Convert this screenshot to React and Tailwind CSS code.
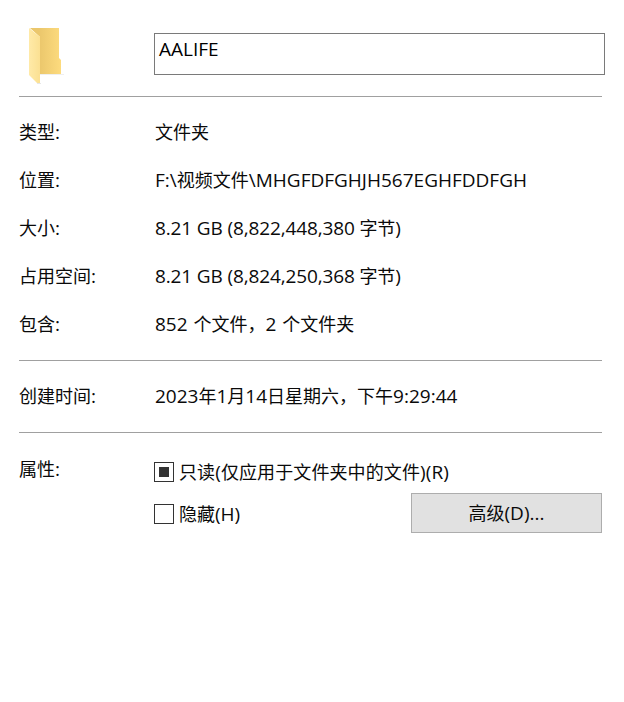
const font = { fontFamily: '"Open Sans","Noto Sans CJK SC",sans-serif' };

// Latin runs are set a little larger than the CJK runs, as in the reference's font pairing.
function T({ children }) {
  const parts = String(children).split(/([\x20-\x7e]+)/);
  return (
    <>
      {parts.map((p, i) =>
        i % 2 === 1 ? (
          <span key={i} className="text-[19px]">{p}</span>
        ) : (
          <span key={i}>{p}</span>
        )
      )}
    </>
  );
}

function Row({ label, value, valueClass = "" }) {
  return (
    <div className="flex h-[48px] items-center">
      <div className="w-[136px] shrink-0"><T>{label}</T></div>
      <div className={valueClass}><T>{value}</T></div>
    </div>
  );
}

function Folder() {
  return (
    <svg width="38" height="58" viewBox="0 0 38 58" className="block">
      <defs>
        <linearGradient id="back" x1="0.3" x2="1" y1="0" y2="0">
          <stop offset="0" stopColor="#ebc76c" />
          <stop offset="1" stopColor="#fddb7e" />
        </linearGradient>
        <linearGradient id="front" x1="0" x2="1" y1="0" y2="0">
          <stop offset="0" stopColor="#ffeaa8" />
          <stop offset="1" stopColor="#fbe092" />
        </linearGradient>
      </defs>
      <path d="M11 46H35V47H11Z" fill="#efefef" />
      <path d="M8 55H12V56H8Z" fill="#e6e6e6" />
      <path d="M1 0H30V30L32 32V46H11V9Z" fill="url(#back)" />
      <path d="M0 0L11 9V55H8L0 47Z" fill="url(#front)" />
    </svg>
  );
}

function Box({ checked }) {
  return (
    <div className="flex h-[20px] w-[20px] shrink-0 items-center justify-center border border-[#333333] bg-white">
      {checked && <div className="h-[10px] w-[10px] bg-[#333333]" />}
    </div>
  );
}

export default function App() {
  return (
    <div className="h-[702px] w-[624px] overflow-hidden bg-white pl-[19px] text-[18px] leading-[24px] text-[#0a0a0a]" style={font}>
      <div className="flex h-[97px] w-[583px] items-start border-b border-[#a0a0a0] pt-[28px]">
        <div className="ml-[10px] w-[125px] shrink-0"><Folder /></div>
        <div className="mt-[5px] h-[42px] w-[451px] shrink-0 border border-[#7a7a7a] px-[4px] pt-[3px] text-black"><T>AALIFE</T></div>
      </div>
      <div className="w-[583px] border-b border-[#a0a0a0] pt-[11px] pb-[12px]">
        <Row label="类型:" value="文件夹" />
        <Row label="位置:" value="F:\视频文件\MHGFDFGHJH567EGHFDDFGH" />
        <Row label="大小:" value="8.21 GB (8,822,448,380 字节)" valueClass="tracking-[-0.13px]" />
        <Row label="占用空间:" value="8.21 GB (8,824,250,368 字节)" valueClass="tracking-[-0.13px]" />
        <Row label="包含:" value="852 个文件，2 个文件夹" valueClass="[word-spacing:1px]" />
      </div>
      <div className="w-[583px] border-b border-[#a0a0a0] pt-[11px] pb-[12px]">
        <Row label="创建时间:" value="2023年1月14日星期六，下午9:29:44" />
      </div>
      <div className="flex w-[583px] pt-[24px]">
        <div className="w-[135px] shrink-0"><T>属性:</T></div>
        <div className="flex-1">
          <div className="mt-[5px] flex h-[20px] items-center gap-[5px]">
            <Box checked />
            <span className="tracking-[0.1px]"><T>只读(仅应用于文件夹中的文件)(R)</T></span>
          </div>
          <div className="mt-[11px] flex items-start justify-between">
            <div className="mt-[11px] flex h-[20px] items-center gap-[5px]">
              <Box />
              <span><T>隐藏(H)</T></span>
            </div>
            <div className="flex h-[40px] w-[191px] items-center justify-center border border-[#adadad] bg-[#e1e1e1]"><T>高级(D)...</T></div>
          </div>
        </div>
      </div>
    </div>
  );
}
